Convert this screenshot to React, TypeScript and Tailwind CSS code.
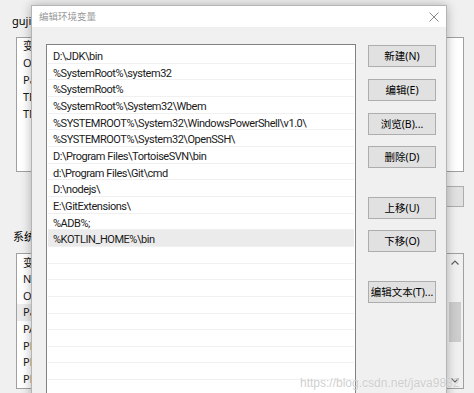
import React from "react";

const dialogRows = [
  "D:\\JDK\\bin",
  "%SystemRoot%\\system32",
  "%SystemRoot%",
  "%SystemRoot%\\System32\\Wbem",
  "%SYSTEMROOT%\\System32\\WindowsPowerShell\\v1.0\\",
  "%SYSTEMROOT%\\System32\\OpenSSH\\",
  "D:\\Program Files\\TortoiseSVN\\bin",
  "d:\\Program Files\\Git\\cmd",
  "D:\\nodejs\\",
  "E:\\GitExtensions\\",
  "%ADB%;",
  "%KOTLIN_HOME%\\bin",
  "",
  "",
  "",
  "",
  "",
  "",
  "",
  "",
  "",
];

const userVars = ["OneDrive", "Path", "TEMP", "TMP"];
const sysVars = [
  "NUMBER_OF_PROCESSORS",
  "OS",
  "Path",
  "PATHEXT",
  "PROCESSOR_ARCHITECTURE",
  "PROCESSOR_IDENTIFIER",
  "PROCESSOR_LEVEL",
];

const buttons: { label: string; mt: string }[] = [
  { label: "新建(N)", mt: "mt-[0px]" },
  { label: "编辑(E)", mt: "mt-[12px]" },
  { label: "浏览(B)...", mt: "mt-[12px]" },
  { label: "删除(D)", mt: "mt-[11px]" },
  { label: "上移(U)", mt: "mt-[29px]" },
  { label: "下移(O)", mt: "mt-[11px]" },
  { label: "编辑文本(T)...", mt: "mt-[29px]" },
];

const font = { fontFamily: '"Noto Sans", "Noto Sans CJK SC", sans-serif' };
const listFont = { fontFamily: 'Roboto, "Noto Sans CJK SC", sans-serif' };

export default function App() {
  return (
    <div
      className="relative w-[474px] h-[393px] overflow-hidden bg-[#f0f0f0] text-[#1a1a1a]"
      style={font}
    >
      {/* Background window */}
      <div className="flex flex-col">
        <div className="ml-[12px] mt-[14px] h-[14px] whitespace-nowrap leading-[14px] text-[11px] text-black">
          gujia 的用户变量(U)
        </div>
        <div className="ml-[16px] mt-[9px] w-[448px] h-[135px] bg-white border border-[#a0a0a0] flex flex-col">
          <div className="h-[16px] pl-[6px] whitespace-nowrap leading-[16px] text-[11px]">变量</div>
          {userVars.map((v) => (
            <div key={v} className="h-[17px] pl-[6px] whitespace-nowrap leading-[17px] text-[11px]">
              {v}
            </div>
          ))}
        </div>
        <div className="flex justify-end mr-[10px] mt-[14px] gap-[8px]">
          <div className="w-[70px] h-[21px] bg-[#e1e1e1] border border-[#adadad]" />
          <div className="w-[70px] h-[21px] bg-[#e1e1e1] border border-[#adadad]" />
          <div className="w-[70px] h-[21px] bg-[#e1e1e1] border border-[#adadad]" />
        </div>
        <div className="ml-[13px] mt-[23px] h-[14px] whitespace-nowrap leading-[14px] text-[11px] text-black">
          系统变量(S)
        </div>
        <div className="ml-[16px] mt-[9px] w-[448px] h-[136px] bg-white border border-[#a0a0a0] flex">
          <div className="flex-1 flex flex-col">
            <div className="h-[17px] pl-[6px] whitespace-nowrap leading-[17px] text-[11px]">变量</div>
            {sysVars.map((v) => (
              <div
                key={v}
                className={`h-[16.7px] pl-[6px] whitespace-nowrap leading-[16.7px] text-[11px] ${
                  v === "Path" ? "bg-[#ececec]" : ""
                }`}
              >
                {v}
              </div>
            ))}
          </div>
          <div className="w-[16px] flex flex-col items-center bg-[#f0f0f0]">
            <div className="h-[16px] flex items-center justify-center">
              <svg width="8" height="5" viewBox="0 0 8 5">
                <path d="M0.5 4.5 L4 1 L7.5 4.5" fill="none" stroke="#606060" strokeWidth="1.2" />
              </svg>
            </div>
            <div className="mt-[32px] w-[12px] h-[40px] bg-[#cdcdcd]" />
            <div className="flex-1" />
            <div className="h-[16px] flex items-center justify-center">
              <svg width="8" height="5" viewBox="0 0 8 5">
                <path d="M0.5 0.5 L4 4 L7.5 0.5" fill="none" stroke="#606060" strokeWidth="1.2" />
              </svg>
            </div>
          </div>
        </div>
      </div>

      {/* Dialog */}
      <div className="absolute left-[31px] top-[5px] w-[416px] h-[400px] bg-[#f0f0f0] border border-[#b4b4b4] shadow-[0_0_10px_rgba(0,0,0,0.28)] flex flex-col">
        <div className="h-[24px] bg-white flex items-center justify-between pl-[7px] pr-[7px]">
          <span className="text-[9.5px] text-[#9a9a9a] leading-none">编辑环境变量</span>
          <svg width="10" height="10" viewBox="0 0 10 10">
            <path d="M0.5 0.5 L9.5 9.5 M9.5 0.5 L0.5 9.5" stroke="#8a8a8a" strokeWidth="1" />
          </svg>
        </div>
        <div className="flex pl-[14px] pt-[17px]">
          <div
            className="w-[310px] h-[360px] bg-white border border-[#828282] overflow-hidden flex flex-col pt-[2px]"
            style={listFont}
          >
            {dialogRows.map((r, i) => (
              <div
                key={i}
                className={`h-[16.67px] shrink-0 mx-[1px] border-b border-[#f0f0f0] pl-[5px] pt-[3px] leading-[14px] text-[11px] tracking-[-0.45px] whitespace-nowrap ${
                  i === 11 ? "bg-[#ebebeb]" : ""
                }`}
              >
                {r}
              </div>
            ))}
          </div>
          <div className="ml-[12px] mt-[1px] flex flex-col">
            {buttons.map((b) => (
              <div
                key={b.label}
                className={`${b.mt} w-[68px] h-[22px] bg-[#e1e1e1] border border-[#adadad] flex items-center justify-center text-[10.5px] text-black leading-none`}
              >
                {b.label}
              </div>
            ))}
          </div>
        </div>
      </div>

      {/* Watermark */}
      <div
        className="absolute left-[300px] top-[375px] text-[12px] leading-[16px] text-[rgba(190,190,190,0.75)] whitespace-nowrap"
        style={{ fontFamily: '"Liberation Sans", sans-serif', textShadow: "0 0 1px rgba(255,255,255,0.8)" }}
      >
        https://blog.csdn.net/java9832
      </div>
    </div>
  );
}
